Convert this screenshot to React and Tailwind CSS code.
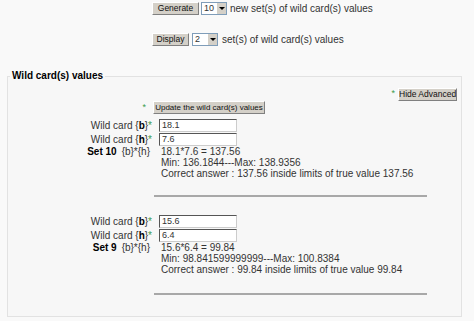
import React from "react";

const font = { fontFamily: '"Liberation Sans", Arial, sans-serif' };

function Btn({ children, className = "" }) {
  return (
    <button
      className={`h-[13px] bg-[#d4d0c8] border border-t-white border-l-white border-r-[#808080] border-b-[#808080] leading-[11px] text-[#111] px-0 whitespace-nowrap overflow-hidden ${className}`}
    >
      {children}
    </button>
  );
}

function Select({ value }) {
  return (
    <div className="flex items-center h-[13px] w-[26px] bg-white border border-[#7f9db9] text-[9px] leading-none pl-[2px] justify-between">
      <span>{value}</span>
      <span className="w-[9px] h-[11px] bg-[#d4d0c8] flex items-center justify-center">
        <span className="block w-0 h-0 border-l-[3px] border-r-[3px] border-t-[3px] border-l-transparent border-r-transparent border-t-black" />
      </span>
    </div>
  );
}

function Field({ name, value }) {
  return (
    <div className="flex items-center h-[14px]">
      <div className="w-[146px] text-right text-[10px] text-[#333] pr-[2px] whitespace-nowrap">
        Wild card {"{"}
        <b className="text-black">{name}</b>
        {"}"}
        <span className="text-[#3a9a4a]">*</span>
      </div>
      <div className="ml-[5px] h-[13px] w-[78px] bg-white border border-[#555] border-r-[#ccc] border-b-[#ccc] text-[9px] leading-[11px] pl-[2px]">
        {value}
      </div>
    </div>
  );
}

function SetBlock({ title, formula, min, answer }) {
  return (
    <div className="flex text-[10px] leading-[11px] text-[#333]">
      <div className="w-[148px] text-right pr-[6px] whitespace-nowrap">
        <b className="text-black">{title}</b>
        <span className="ml-[5px]">{"{b}*{h}"}</span>
      </div>
      <div className="ml-[5px] whitespace-nowrap">
        <div>{formula}</div>
        <div>{min}</div>
        <div>{answer}</div>
      </div>
    </div>
  );
}

export default function App() {
  return (
    <div className="w-[474px] h-[321px] bg-[#f9f9f9] overflow-hidden text-[#333]" style={font}>
      {/* top controls */}
      <div className="pl-[152px] pt-[2px]">
        <div className="flex items-center gap-[2px] h-[13px]">
          <Btn className="w-[47px] text-[8.5px]">Generate</Btn>
          <Select value="10" />
          <span className="text-[10px] ml-[1px]">new set(s) of wild card(s) values</span>
        </div>
        <div className="flex items-center gap-[3px] h-[13px] mt-[18px]">
          <Btn className="w-[37px] text-[8.5px]">Display</Btn>
          <Select value="2" />
          <span className="text-[10px] ml-[1px]">set(s) of wild card(s) values</span>
        </div>
      </div>

      {/* fieldset */}
      <fieldset className="mt-[25px] ml-[7px] w-[455px] h-[246px] border border-[#e2e2e2] bg-[#f7f7f7]">
        <legend className="ml-[2px] px-[2px] text-[10px] font-bold text-black leading-[10px]">
          Wild card(s) values
        </legend>

        <div className="flex justify-end items-center pr-[4px] mt-[7px] h-[12px]">
          <span className="text-[#3a9a4a] text-[9px] mr-[3px]">*</span>
          <Btn className="w-[59px] h-[12px] text-[8.5px]">Hide Advanced</Btn>
        </div>

        <div className="flex items-center h-[13px] mt-[1px]">
          <div className="w-[141px] text-right text-[#3a9a4a] text-[9px] pr-[3px]">*</div>
          <Btn className="ml-[4px] w-[112px] text-[8px]">Update the wild card(s) values</Btn>
        </div>

        <div className="mt-[4px] flex flex-col">
          <Field name="b" value="18.1" />
          <Field name="h" value="7.6" />
        </div>
        <SetBlock
          title="Set 10"
          formula="18.1*7.6 = 137.56"
          min="Min: 136.1844---Max: 138.9356"
          answer="Correct answer : 137.56 inside limits of true value 137.56"
        />
        <div className="ml-[146px] mt-[16px] w-[273px] h-[2px] bg-[#a8a8a8]" />

        <div className="mt-[17px] flex flex-col">
          <Field name="b" value="15.6" />
          <Field name="h" value="6.4" />
        </div>
        <SetBlock
          title="Set 9"
          formula="15.6*6.4 = 99.84"
          min="Min: 98.841599999999---Max: 100.8384"
          answer="Correct answer : 99.84 inside limits of true value 99.84"
        />
        <div className="ml-[146px] mt-[18px] w-[273px] h-[2px] bg-[#a8a8a8]" />
      </fieldset>
    </div>
  );
}
